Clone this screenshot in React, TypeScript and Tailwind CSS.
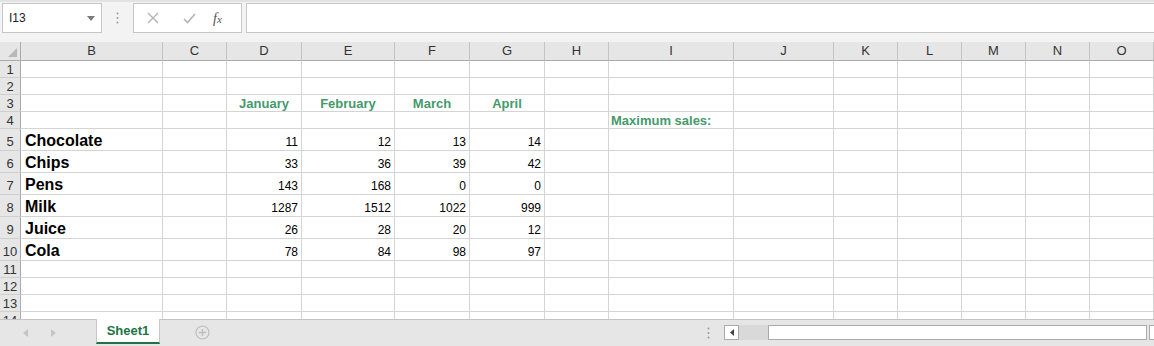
import React from "react";

const cols = ["B", "C", "D", "E", "F", "G", "H", "I", "J", "K", "L", "M", "N", "O"];

type Cell = { text: string; kind: "label" | "num" | "month" | "green" };
type Row = { n: number; h: number; cells: Record<string, Cell> };

const num = (t: number | string): Cell => ({ text: String(t), kind: "num" });
const month = (t: string): Cell => ({ text: t, kind: "month" });
const label = (t: string): Cell => ({ text: t, kind: "label" });

const data: [string, number[]][] = [
  ["Chocolate", [11, 12, 13, 14]],
  ["Chips", [33, 36, 39, 42]],
  ["Pens", [143, 168, 0, 0]],
  ["Milk", [1287, 1512, 1022, 999]],
  ["Juice", [26, 28, 20, 12]],
  ["Cola", [78, 84, 98, 97]],
];

const rows: Row[] = [
  { n: 1, h: 17, cells: {} },
  { n: 2, h: 17, cells: {} },
  {
    n: 3,
    h: 17,
    cells: { D: month("January"), E: month("February"), F: month("March"), G: month("April") },
  },
  { n: 4, h: 17, cells: { I: { text: "Maximum sales:", kind: "green" } } },
  ...data.map(([name, vals], i) => ({
    n: 5 + i,
    h: 22,
    cells: {
      B: label(name),
      D: num(vals[0]),
      E: num(vals[1]),
      F: num(vals[2]),
      G: num(vals[3]),
    },
  })),
  { n: 11, h: 17, cells: {} },
  { n: 12, h: 17, cells: {} },
  { n: 13, h: 17, cells: {} },
  { n: 14, h: 17, cells: {} },
];

function CellContent({ cell }: { cell?: Cell }) {
  if (!cell) return null;
  if (cell.kind === "label")
    return <span className="pl-[4px] text-[16px] leading-[18px] font-bold text-black">{cell.text}</span>;
  if (cell.kind === "num")
    return (
      <span className="ml-auto pr-[3px] pb-[1px] text-[12px] leading-[14px] text-black">{cell.text}</span>
    );
  if (cell.kind === "month")
    return (
      <span className="mx-auto text-[13px] leading-[15px] font-bold text-[#45996c]">{cell.text}</span>
    );
  return (
    <span className="pl-[2px] text-[13px] leading-[15px] font-bold text-[#45996c] whitespace-nowrap">
      {cell.text}
    </span>
  );
}

export default function App() {
  return (
    <div
      className="w-[1154px] h-[346px] overflow-hidden bg-white flex flex-col"
      style={{ fontFamily: '"Liberation Sans", Arial, sans-serif' }}
    >
      {/* Formula toolbar */}
      <div className="h-[42px] shrink-0 bg-[#f3f3f3] border-t-[2px] border-[#e2e2e2] flex items-start pt-[1px]">
        <div className="ml-[2px] w-[100px] h-[30px] bg-white border border-[#c6c6c6] flex items-center">
          <span className="pl-[6px] text-[12px] text-[#222]">I13</span>
          <svg className="ml-auto mr-[6px]" width="8" height="5" viewBox="0 0 8 5">
            <path d="M0 0 L8 0 L4 5 Z" fill="#7a7a7a" />
          </svg>
        </div>
        <div className="w-[31px] h-[30px] flex items-center justify-center">
          <svg width="3" height="12" viewBox="0 0 3 12">
            <circle cx="1.5" cy="1.5" r="1" fill="#9a9a9a" />
            <circle cx="1.5" cy="6" r="1" fill="#9a9a9a" />
            <circle cx="1.5" cy="10.5" r="1" fill="#9a9a9a" />
          </svg>
        </div>
        <div className="w-[109px] h-[30px] bg-white border border-[#c6c6c6] flex items-center">
          <svg className="ml-[13px]" width="12" height="12" viewBox="0 0 12 12">
            <path d="M1 1 L11 11 M11 1 L1 11" stroke="#b4b4b4" strokeWidth="1.4" />
          </svg>
          <svg className="ml-[24px]" width="13" height="11" viewBox="0 0 13 11">
            <path d="M1 6 L4.5 9.5 L12 1" stroke="#b4b4b4" strokeWidth="1.6" fill="none" />
          </svg>
          <span
            className="ml-[17px] text-[14px] italic text-[#555]"
            style={{ fontFamily: '"Liberation Serif", "Times New Roman", serif' }}
          >
            f<span className="text-[11px]">x</span>
          </span>
        </div>
        <div className="ml-[4px] flex-1 h-[30px] bg-white border border-[#c6c6c6] border-r-0" />
      </div>

      {/* Grid */}
      <div className="h-[277px] shrink-0 overflow-hidden">
        <div className="grid grid-cols-[21px_142px_64px_75px_93px_75px_75px_64px_125px_100px_64px_64px_64px_64px_64px]">
          {/* header row */}
          <div className="h-[19px] bg-[#e6e6e6] border-r border-b border-[#ababab] relative">
            <svg className="absolute right-[3px] bottom-[3px]" width="9" height="9" viewBox="0 0 9 9">
              <path d="M9 0 L9 9 L0 9 Z" fill="#b8b8b8" />
            </svg>
          </div>
          {cols.map((c) => (
            <div
              key={c}
              className="h-[19px] bg-[#e6e6e6] border-r border-[#c3c3c3] border-b border-b-[#ababab] flex items-center justify-center text-[13px] text-[#333]"
            >
              {c}
            </div>
          ))}
          {rows.map((r) => (
            <React.Fragment key={r.n}>
              <div
                className={`${r.h === 22 ? "h-[22px] pb-[1px]" : "h-[17px]"} bg-[#e6e6e6] border-r border-r-[#ababab] border-b border-[#cfcfcf] flex items-end justify-center text-[13px] leading-[15px] text-[#333]`}
              >
                {r.n}
              </div>
              {cols.map((c) => (
                <div
                  key={c}
                  className={`${r.h === 22 ? "h-[22px]" : "h-[17px]"} border-r border-b border-[#d4d4d4] flex items-end overflow-visible`}
                >
                  <CellContent cell={r.cells[c]} />
                </div>
              ))}
            </React.Fragment>
          ))}
        </div>
      </div>

      {/* Bottom sheet bar */}
      <div className="flex-1 bg-[#e6e6e6] border-t border-[#c3c3c3] flex items-start relative">
        <div className="w-[96px] h-[25px] flex items-center">
          <svg className="ml-[23px]" width="5" height="8" viewBox="0 0 5 8">
            <path d="M5 0 L5 8 L0 4 Z" fill="#c4c4c4" />
          </svg>
          <svg className="ml-[23px]" width="5" height="8" viewBox="0 0 5 8">
            <path d="M0 0 L0 8 L5 4 Z" fill="#c4c4c4" />
          </svg>
        </div>
        <div className="w-[64px] h-[25px] -mt-[1px] bg-white border-x border-[#c6c6c6] border-b-[2px] border-b-[#217346] flex items-center justify-center text-[13px] font-bold text-[#217346]">
          Sheet1
        </div>
        <div className="ml-[35px] h-[25px] flex items-center">
          <svg width="15" height="15" viewBox="0 0 15 15">
            <circle cx="7.5" cy="7.5" r="6.5" fill="none" stroke="#bdbdbd" strokeWidth="1.2" />
            <path d="M7.5 4 L7.5 11 M4 7.5 L11 7.5" stroke="#bdbdbd" strokeWidth="1.3" />
          </svg>
        </div>
        <div className="ml-auto flex items-center h-[25px]">
          <svg className="mr-[14px]" width="3" height="12" viewBox="0 0 3 12">
            <circle cx="1.5" cy="1.5" r="1" fill="#9a9a9a" />
            <circle cx="1.5" cy="6" r="1" fill="#9a9a9a" />
            <circle cx="1.5" cy="10.5" r="1" fill="#9a9a9a" />
          </svg>
          <div className="w-[15px] h-[15px] bg-white border border-[#ababab] flex items-center justify-center">
            <svg width="4" height="7" viewBox="0 0 4 7">
              <path d="M4 0 L4 7 L0 3.5 Z" fill="#444" />
            </svg>
          </div>
          <div className="w-[29px] h-[15px] bg-[#d9d9d9]" />
          <div className="w-[379px] h-[15px] bg-white border border-[#ababab]" />
          <div className="ml-[2px] w-[5px] h-[15px] bg-white border border-r-0 border-[#ababab]" />
        </div>
      </div>
    </div>
  );
}
